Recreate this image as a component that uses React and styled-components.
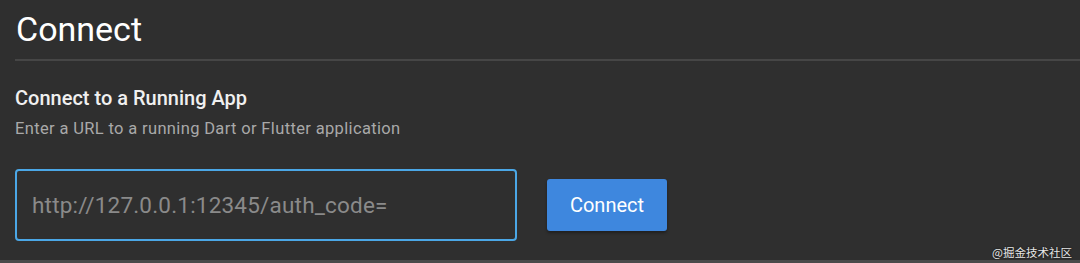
import React from 'react';
import styled, { createGlobalStyle } from 'styled-components';

const GlobalStyle = createGlobalStyle`
  html, body {
    margin: 0;
    padding: 0;
    background-color: #2f2f2f;
  }
  body {
    font-family: Roboto, "Liberation Sans", Arial, sans-serif;
  }
`;

const Page = styled.div`
  position: relative;
  height: 263px;
  box-sizing: border-box;
  padding: 9px 0 0 15px;
  background-color: #2f2f2f;
  border-bottom: 3px solid #4a4a4a;
  overflow: hidden;
`;

const Title = styled.h1`
  margin: 0 0 0 1px;
  font-size: 34px;
  line-height: 40px;
  font-weight: 400;
  color: #ffffff;
`;

const Divider = styled.hr`
  margin: 10px 0 0 0;
  border: none;
  height: 2px;
  background-color: #464646;
`;

const Section = styled.section`
  margin-top: 25px;
`;

const Heading = styled.h2`
  margin: 0;
  font-size: 20px;
  line-height: 24px;
  font-weight: 500;
  color: #f0f0f0;
`;

const Description = styled.p`
  margin: 9px 0 0 0;
  font-size: 16.5px;
  line-height: 20px;
  letter-spacing: 0.35px;
  color: #a9a9a9;
`;

const Row = styled.div`
  display: flex;
  align-items: center;
  gap: 30px;
  margin-top: 30px;
`;

const UrlInput = styled.input`
  box-sizing: border-box;
  width: 502px;
  height: 72px;
  padding: 0 15px;
  border: 2px solid #4ba7e6;
  border-radius: 4px;
  background: transparent;
  font-family: Roboto, "Liberation Sans", Arial, sans-serif;
  font-size: 22.5px;
  letter-spacing: 0.2px;
  color: #e0e0e0;
  outline: none;

  &::placeholder {
    color: #8a8a8a;
  }
`;

const Button = styled.button`
  width: 120px;
  height: 52px;
  border: none;
  border-radius: 3px;
  background-color: ${(p) => (p.primary ? '#3e87de' : '#555')};
  color: #ffffff;
  font-family: Roboto, "Liberation Sans", Arial, sans-serif;
  font-size: 20px;
  font-weight: 400;
  box-shadow: 0 2px 3px rgba(0, 0, 0, 0.35);
  cursor: pointer;
`;

const Watermark = styled.span`
  position: absolute;
  right: 8px;
  bottom: 0;
  font-family: "Noto Sans CJK SC", "Noto Sans", sans-serif;
  font-size: 11.5px;
  line-height: 15px;
  color: #e8e8e8;
  text-shadow: 0 0 2px rgba(0, 0, 0, 0.8);
`;

const App = () => {
  return (
    <>
      <GlobalStyle />
      <Page>
        <Title>Connect</Title>
        <Divider />
        <Section>
          <Heading>Connect to a Running App</Heading>
          <Description>Enter a URL to a running Dart or Flutter application</Description>
          <Row>
            <UrlInput type="text" placeholder="http://127.0.0.1:12345/auth_code=" />
            <Button primary>Connect</Button>
          </Row>
        </Section>
        <Watermark>@掘金技术社区</Watermark>
      </Page>
    </>
  );
};

export default App;
